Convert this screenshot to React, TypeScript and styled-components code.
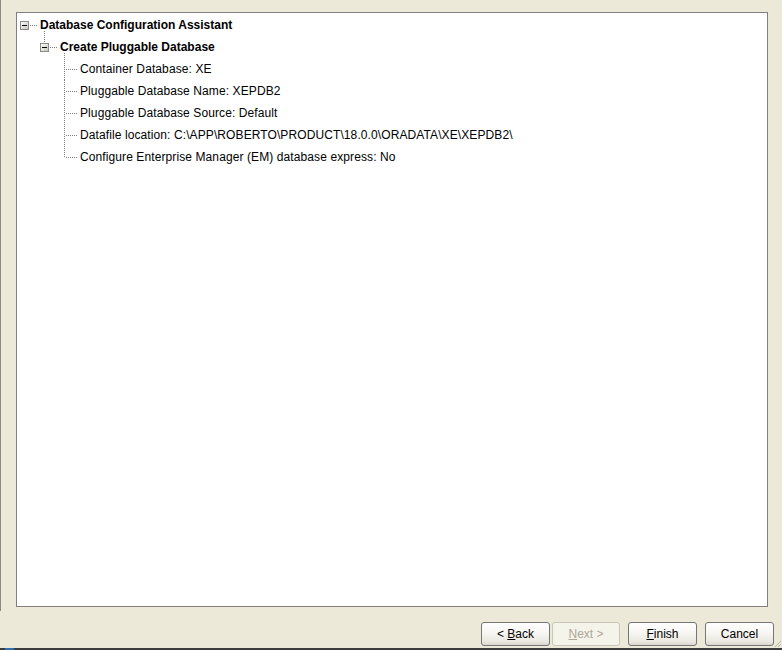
import React from "react";
import styled, { createGlobalStyle } from "styled-components";

const GlobalStyle = createGlobalStyle`
  html, body { margin: 0; padding: 0; background: #ece9d8; }
  body { font-family: "Liberation Sans", Arial, sans-serif; }
  * { box-sizing: border-box; }
`;

const Window = styled.div`
  width: 782px;
  height: 650px;
  background: #ece9d8;
  display: flex;
  flex-direction: column;
  overflow: hidden;
  position: relative;
`;

const Body = styled.div`
  height: 611px;
  border-left: 1px solid #8a8a8a;
  padding: 12px 14px 0 15px;
`;

const Panel = styled.div`
  width: 752px;
  height: 595px;
  border: 1px solid #808080;
  background: #ffffff;
  display: flex;
  flex-direction: column;
  padding-top: 1px;
`;

const Row = styled.div<{ $level: number }>`
  display: flex;
  align-items: center;
  height: 22px;
  padding-left: ${(p) => 3 + p.$level * 20}px;
`;

const Label = styled.span<{ $bold?: boolean }>`
  font-family: "Liberation Sans", Arial, sans-serif;
  font-size: 12px;
  font-weight: ${(p) => (p.$bold ? 700 : 400)};
  letter-spacing: ${(p) => (p.$bold ? "0" : "0.1px")};
  color: #000;
  white-space: nowrap;
  line-height: 14px;
`;

const Gutter = styled.svg`
  flex: none;
  width: 20px;
  height: 22px;
  overflow: visible;
  display: block;
`;

const Footer = styled.div`
  height: 37px;
  display: flex;
  justify-content: flex-end;
  align-items: flex-start;
  padding: 11px 8px 0 0;
`;

const Button = styled.button<{ $w: number; $ml: number }>`
  width: ${(p) => p.$w}px;
  height: 24px;
  margin-left: ${(p) => p.$ml}px;
  padding: 0;
  border: 1px solid #767676;
  border-radius: 3px;
  background: linear-gradient(#ffffff 0%, #f7f6f2 45%, #e9e7df 85%, #d9d6cc 100%);
  font-family: "Liberation Sans", Arial, sans-serif;
  font-size: 12px;
  color: #000;
  display: flex;
  align-items: center;
  justify-content: center;
  &:disabled {
    border-color: #c9c7ba;
    background: #f5f4ea;
    color: #aca899;
  }
`;

const Mn = styled.span`
  text-decoration: underline;
  text-underline-offset: 1px;
`;

const Strip = styled.div`
  height: 2px;
  background: #3c3c3c;
  display: flex;
  padding-left: 5px;
`;

const StripBlue = styled.div`
  width: 9px;
  height: 2px;
  background: #2f6fb0;
`;

const Grip = styled.svg`
  position: absolute;
  right: 0;
  bottom: 2px;
  width: 8px;
  height: 8px;
`;

const DOT = "#808080";

const BoxIcon: React.FC = () => (
  <>
    <defs>
      <linearGradient id="bx" x1="0" y1="0" x2="1" y2="1">
        <stop offset="0" stopColor="#ffffff" />
        <stop offset="1" stopColor="#c6c3b6" />
      </linearGradient>
    </defs>
    <rect x="0.5" y="7.5" width="8" height="8" fill="url(#bx)" stroke="#8a8a8a" shapeRendering="crispEdges" />
    <line x1="2" y1="11.5" x2="7" y2="11.5" stroke="#000" shapeRendering="crispEdges" />
  </>
);

const Dotted: React.FC<{ x1: number; y1: number; x2: number; y2: number }> = (p) => (
  <line {...p} stroke={DOT} strokeDasharray="1 1" shapeRendering="crispEdges" />
);

const RootGutter: React.FC = () => (
  <Gutter viewBox="0 0 20 22">
    <BoxIcon />
    <Dotted x1={10} y1={11.5} x2={18} y2={11.5} />
  </Gutter>
);

const ChildGutter: React.FC = () => (
  <Gutter viewBox="0 0 20 22">
    <Dotted x1={4.5} y1={-5} x2={4.5} y2={7} />
    <BoxIcon />
    <Dotted x1={10} y1={11.5} x2={18} y2={11.5} />
  </Gutter>
);

const LeafGutter: React.FC<{ first?: boolean; last?: boolean }> = ({ first, last }) => (
  <Gutter viewBox="0 0 20 22">
    <Dotted x1={4.5} y1={first ? -5 : 0} x2={4.5} y2={last ? 12 : 22} />
    <Dotted x1={6} y1={11.5} x2={17} y2={11.5} />
  </Gutter>
);

const leaves = [
  "Container Database: XE",
  "Pluggable Database Name: XEPDB2",
  "Pluggable Database Source: Default",
  "Datafile location: C:\\APP\\ROBERTO\\PRODUCT\\18.0.0\\ORADATA\\XE\\XEPDB2\\",
  "Configure Enterprise Manager (EM) database express: No",
];

export default function App() {
  return (
    <Window>
      <GlobalStyle />
      <Body>
        <Panel>
          <Row $level={0}>
            <RootGutter />
            <Label $bold>Database Configuration Assistant</Label>
          </Row>
          <Row $level={1}>
            <ChildGutter />
            <Label $bold>Create Pluggable Database</Label>
          </Row>
          {leaves.map((t, i) => (
            <Row $level={2} key={t}>
              <LeafGutter first={i === 0} last={i === leaves.length - 1} />
              <Label>{t}</Label>
            </Row>
          ))}
        </Panel>
      </Body>
      <Footer>
        <Button $w={69} $ml={0}>
          &lt;&nbsp;<Mn>B</Mn>ack
        </Button>
        <Button $w={68} $ml={2} disabled>
          <Mn>N</Mn>ext&nbsp;&gt;
        </Button>
        <Button $w={69} $ml={8}>
          <Mn>F</Mn>inish
        </Button>
        <Button $w={69} $ml={8}>
          Cancel
        </Button>
      </Footer>
      <Strip>
        <StripBlue />
      </Strip>
      <Grip viewBox="0 0 8 8">
        <line x1="7" y1="1" x2="1" y2="7" stroke="#b5b2a4" />
        <line x1="7" y1="4" x2="4" y2="7" stroke="#b5b2a4" />
      </Grip>
    </Window>
  );
}
